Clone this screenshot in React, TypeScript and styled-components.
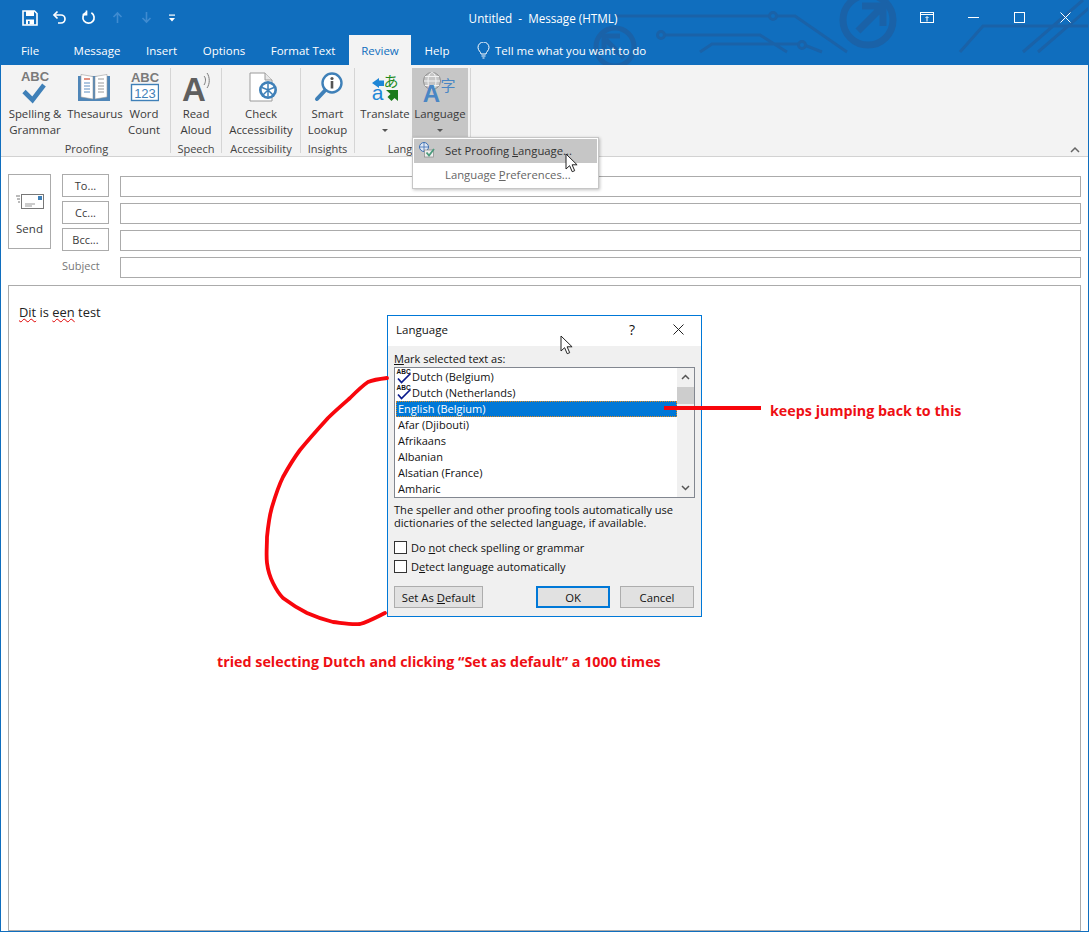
import React from "react";
import styled, { createGlobalStyle } from "styled-components";

const Global = createGlobalStyle`
  html, body { margin: 0; padding: 0; background: #fff; }
  * { box-sizing: border-box; }
  #root { width: 1089px; height: 932px; }
`;

const FONT = `"Open Sans", "Noto Sans", "Liberation Sans", sans-serif`;

const Window = styled.div`
  position: relative;
  width: 1089px;
  height: 932px;
  overflow: hidden;
  display: flex;
  flex-direction: column;
  background: #fff;
  border: 1px solid #106ebe;
  border-top: 0;
  font-family: ${FONT};
  font-size: 11.5px;
  color: #3a3a3a;
`;

const BlueHead = styled.div`
  position: relative;
  background: #106ebe;
  color: #fff;
  height: 65px;
  margin: 0 -1px;
  overflow: hidden;
`;
const Circuit = styled.svg`
  position: absolute;
  left: 0;
  top: 0;
  pointer-events: none;
`;
const TitleRow = styled.div`
  position: relative;
  height: 35px;
  display: flex;
  align-items: center;
  padding-left: 22px;
`;
const Qat = styled.div`
  display: flex;
  align-items: center;
  gap: 14px;
  width: 446px;
`;
const WindowTitle = styled.div`
  width: 150px;
  text-align: center;
  font-size: 11.7px;
  white-space: pre;
`;
const WinControls = styled.div`
  margin-left: auto;
  display: flex;
  align-items: center;
  padding-right: 1px;
`;
const WinBtn = styled.div`
  width: 46px;
  height: 32px;
  display: flex;
  align-items: center;
  justify-content: center;
`;
const TabRow = styled.div`
  position: relative;
  height: 30px;
  display: flex;
  align-items: stretch;
  padding-left: 8px;
`;
const Tab = styled.div<{ $w: number; $active?: boolean; $left?: number }>`
  width: ${p => p.$w}px;
  margin-left: ${p => p.$left ?? 0}px;
  display: flex;
  align-items: center;
  justify-content: center;
  font-size: 11.5px;
  white-space: nowrap;
  background: ${p => (p.$active ? "#f3f3f3" : "transparent")};
  color: ${p => (p.$active ? "#106ebe" : "#fff")};
`;
const TellMe = styled.div`
  display: flex;
  align-items: center;
  gap: 5px;
  font-size: 11.5px;
  margin-left: 14px;
  white-space: nowrap;
`;

const Ribbon = styled.div`
  position: relative;
  height: 92px;
  background: #f3f3f3;
  border-bottom: 1px solid #d2d2d2;
  display: flex;
  padding: 3px 0 0 2px;
`;
const Group = styled.div<{ $w: number }>`
  width: ${p => p.$w}px;
  height: 85px;
  border-right: 1px solid #d5d5d5;
  display: flex;
  flex-direction: column;
`;
const GroupButtons = styled.div`
  display: flex;
  height: 70px;
`;
const GroupLabel = styled.div`
  text-align: center;
  font-size: 11px;
  line-height: 14px;
  margin-top: 4px;
  color: #444;
  white-space: nowrap;
`;
const RibbonBtn = styled.div<{ $w: number; $on?: boolean; $pad?: number }>`
  width: ${p => p.$w}px;
  height: 70px;
  flex: none;
  padding-left: ${p => p.$pad ?? 0}px;
  display: flex;
  flex-direction: column;
  align-items: center;
  background: ${p => (p.$on ? "#c6c6c6" : "transparent")};
`;
const RibbonIcon = styled.div`
  height: 38px;
  width: 100%;
  padding-top: 2px;
  display: flex;
  align-items: flex-start;
  justify-content: center;
`;
const RibbonText = styled.div`
  text-align: center;
  font-size: 11.4px;
  line-height: 16px;
  white-space: pre;
`;
const Caret = styled.div`
  width: 0;
  height: 0;
  margin-top: 7px;
  border-left: 3px solid transparent;
  border-right: 3px solid transparent;
  border-top: 3px solid #555;
`;
const Collapse = styled.svg`
  position: absolute;
  right: 8px;
  bottom: 3px;
`;

const Compose = styled.div`
  height: 128px;
  display: flex;
  padding: 17px 7px 0 7px;
`;
const Send = styled.div`
  width: 43px;
  height: 75px;
  border: 1px solid #ababab;
  display: flex;
  flex-direction: column;
  align-items: center;
  padding-top: 19px;
  gap: 12px;
  font-size: 11.5px;
`;
const AddrCol = styled.div`
  width: 58px;
  margin-left: 11px;
  display: flex;
  flex-direction: column;
`;
const AddrBtn = styled.div`
  width: 47px;
  height: 23px;
  margin-bottom: 4px;
  border: 1px solid #ababab;
  font-size: 11px;
  display: flex;
  align-items: center;
  justify-content: center;
`;
const SubjectLabel = styled.div`
  height: 21px;
  font-size: 11px;
  line-height: 21px;
  color: #777;
`;
const FieldCol = styled.div`
  flex: 1;
  padding-top: 2px;
  display: flex;
  flex-direction: column;
  gap: 6px;
`;
const Field = styled.div`
  height: 21px;
  border: 1px solid #ababab;
`;
const MailBody = styled.div`
  flex: 1;
  margin: 0 7px 0 7px;
  border: 1px solid #ababab;
  padding: 18px 10px;
  font-size: 12.9px;
  line-height: 17px;
  color: #222;
`;
const Misspelled = styled.span`
  text-decoration: underline wavy #e00000 1px;
  text-underline-offset: 1px;
`;

const Menu = styled.div`
  position: absolute;
  left: 411px;
  top: 137px;
  width: 187px;
  height: 52px;
  background: #fff;
  border: 1px solid #c6c6c6;
  box-shadow: 1px 1px 3px rgba(0, 0, 0, 0.25);
  padding: 1px;
`;
const MenuItem = styled.div<{ $on?: boolean }>`
  height: 24px;
  display: flex;
  align-items: center;
  padding: 0 0 2px 4px;
  background: ${p => (p.$on ? "#c6c6c6" : "transparent")};
  color: ${p => (p.$on ? "#333" : "#666")};
  font-size: 11.3px;
  white-space: nowrap;
`;
const MenuIcon = styled.div`
  width: 27px;
  height: 18px;
  flex: none;
`;

const Dialog = styled.div`
  position: absolute;
  left: 386px;
  top: 315px;
  width: 315px;
  height: 302px;
  border: 1px solid #0078d7;
  background: #f0f0f0;
  color: #111;
  font-size: 11px;
  display: flex;
  flex-direction: column;
`;
const DialogTitle = styled.div`
  height: 30px;
  background: #fff;
  display: flex;
  align-items: center;
  padding: 0 0 4px 8px;
  font-size: 11.5px;
`;
const DialogHelp = styled.div`
  margin-left: auto;
  width: 16px;
  font-size: 14px;
  text-align: center;
`;
const DialogClose = styled.div`
  width: 46px;
  margin-left: 15px;
  display: flex;
  justify-content: center;
`;
const DialogBody = styled.div`
  flex: 1;
  padding: 6px 6px 8px 6px;
  display: flex;
  flex-direction: column;
`;
const ListCaption = styled.div`
  height: 15px;
  line-height: 14px;
`;
const ListBox = styled.div`
  height: 131px;
  border: 1px solid #828790;
  background: #fff;
  display: flex;
  padding: 1px 0 0 1px;
`;
const Rows = styled.div`
  flex: 1;
  display: flex;
  flex-direction: column;
`;
const Row = styled.div<{ $sel?: boolean; $icon?: boolean }>`
  height: 16px;
  flex: none;
  display: flex;
  align-items: center;
  padding: 0 0 2px ${p => (p.$icon ? "0" : "2px")};
  background: ${p => (p.$sel ? "#0078d7" : "transparent")};
  color: ${p => (p.$sel ? "#fff" : "#111")};
  outline: ${p => (p.$sel ? "1px dotted #e08a1e" : "none")};
  outline-offset: -1px;
  white-space: nowrap;
`;
const ScrollBar = styled.div`
  width: 17px;
  background: #f0f0f0;
  display: flex;
  flex-direction: column;
  align-items: center;
  margin-top: -1px;
`;
const ScrollBtn = styled.div`
  height: 18px;
  flex: none;
  display: flex;
  align-items: center;
  justify-content: center;
`;
const Thumb = styled.div`
  width: 17px;
  height: 17px;
  margin-top: 1px;
  flex: none;
  background: #cdcdcd;
`;
const ScrollSpace = styled.div`
  flex: 1;
`;
const Note = styled.div`
  margin-top: 5px;
  line-height: 13px;
  font-size: 11.1px;
  white-space: pre;
`;
const CheckRow = styled.label<{ $top: number }>`
  display: flex;
  align-items: center;
  gap: 4px;
  height: 13px;
  margin-top: ${p => p.$top}px;
`;
const CheckBox = styled.span`
  width: 13px;
  height: 13px;
  border: 1px solid #333;
  background: #fff;
  flex: none;
`;
const DialogButtons = styled.div`
  display: flex;
  margin-top: auto;
`;
const DialogBtn = styled.div<{ $w: number; $def?: boolean; $left?: number }>`
  width: ${p => p.$w}px;
  height: 22px;
  margin-left: ${p => p.$left ?? 0}px;
  background: #e1e1e1;
  border: ${p => (p.$def ? "2px solid #0078d7" : "1px solid #adadad")};
  display: flex;
  align-items: center;
  justify-content: center;
  font-size: 11.3px;
`;

const Overlay = styled.svg`
  position: absolute;
  left: 0;
  top: 0;
  pointer-events: none;
`;
const Remark = styled.div<{ $x: number; $y: number }>`
  position: absolute;
  left: ${p => p.$x}px;
  top: ${p => p.$y}px;
  color: #ee0f14;
  font-family: ${FONT};
  font-weight: 700;
  font-size: 14.3px;
  line-height: 18px;
  white-space: nowrap;
`;
const Pointer = styled.svg<{ $x: number; $y: number }>`
  position: absolute;
  left: ${p => p.$x}px;
  top: ${p => p.$y}px;
`;

const CursorArrow = ({ x, y }: { x: number; y: number }) => (
  <Pointer $x={x} $y={y} width="14" height="20" viewBox="0 0 14 20">
    <path d="M1 1v15l3.600-3.300 2.600 6 2.500-1-2.600-5.900h5z" fill="#fff" stroke="#222" strokeWidth="1" strokeLinejoin="round" />
  </Pointer>
);

const SaveIcon = () => (
  <svg width="16" height="16" viewBox="0 0 16 16">
    <path d="M1 1h11.500L15 3.500V15H1z" fill="none" stroke="#fff" strokeWidth="1.600" />
    <rect x="4" y="1" width="8" height="5" fill="#fff" />
    <rect x="4" y="9.500" width="8" height="5" fill="#fff" />
    <rect x="6" y="11" width="1.600" height="3" fill="#106ebe" />
  </svg>
);
const UndoIcon = () => (
  <svg width="15" height="15" viewBox="0 0 15 15" fill="none" stroke="#fff" strokeWidth="1.700">
    <path d="M5.500 1.500 2 5l3.500 3.500" />
    <path d="M2.500 5H9a4 4 0 0 1 0 8H6" />
  </svg>
);
const RedoIcon = () => (
  <svg width="15" height="15" viewBox="0 0 15 15" fill="none" stroke="#fff" strokeWidth="1.700">
    <path d="M5 2.600a5.600 5.600 0 1 0 5.400.2" />
    <path d="M5.500 0.400v4.200H1.600" />
  </svg>
);
const DimArrow = ({ down }: { down?: boolean }) => (
  <svg width="15" height="13" viewBox="0 0 15 13" fill="none" stroke="#3f8bd0" strokeWidth="1.600" style={{ transform: down ? "rotate(180deg)" : undefined }}>
    <path d="M7.500 12V2M3.500 6l4-4 4 4" />
  </svg>
);
const QatMore = () => (
  <svg width="8" height="8" viewBox="0 0 8 8" fill="#fff">
    <rect x="1" y="0.500" width="6" height="1.200" />
    <path d="M1 4h6L4 7.400z" />
  </svg>
);

const SpellIcon = () => (
  <svg width="36" height="36" viewBox="0 0 36 36">
    <text x="18" y="11" textAnchor="middle" fontFamily="Liberation Sans" fontWeight="700" fontSize="13" fill="#7a7a7a">ABC</text>
    <path d="M7 21.500 15.500 30 27 15" fill="none" stroke="#3f80b8" strokeWidth="4.600" />
  </svg>
);
const BookIcon = () => (
  <svg width="34" height="32" viewBox="1 -3 34 32">
    <rect x="1" y="3" width="32" height="25" fill="#4f86b8" />
    <path d="M4 1.500 16 3.500V26L4 24z" fill="#fff" stroke="#9c9c9c" strokeWidth=".6" />
    <path d="M30 1.500 18 3.500V26L30 24z" fill="#fff" stroke="#9c9c9c" strokeWidth=".6" />
    <path d="M7 6h6" stroke="#d1492e" strokeWidth="1.200" />
    <path d="M7 10h6M7 13h6M7 16h6M7 19h6" stroke="#5c8ec0" strokeWidth="1" />
    <path d="M21 6h6M21 10h6M21 13h6M21 16h6M21 19h6" stroke="#9a9a9a" strokeWidth="1" />
  </svg>
);
const WordCountIcon = () => (
  <svg width="30" height="34" viewBox="-1 0 30 34">
    <text x="15" y="12" textAnchor="middle" fontFamily="Liberation Sans" fontSize="13" fontWeight="700" fill="#7a7a7a">ABC</text>
    <rect x="1.500" y="14.500" width="27" height="16" fill="#fff" stroke="#3f80b8" strokeWidth="1.400" />
    <text x="15" y="27.500" textAnchor="middle" fontFamily="Liberation Sans" fontSize="13" fill="#3f80b8">123</text>
  </svg>
);
const ReadAloudIcon = () => (
  <svg width="34" height="40" viewBox="0 0 34 40">
    <text x="15" y="31" textAnchor="middle" fontFamily="Liberation Sans" fontWeight="700" fontSize="33" fill="#5f5f5f">A</text>
    <path d="M25 6c2 2 2 6 0 9M28 3c3 4 3 11 0 15" fill="none" stroke="#7a7a7a" strokeWidth="1" />
  </svg>
);
const AccessIcon = () => (
  <svg width="34" height="34" viewBox="0 0 34 34">
    <path d="M6 3h15l7 7v21H6z" fill="#fff" stroke="#9a9a9a" />
    <path d="M21 3v7h7" fill="#e8e8e8" stroke="#9a9a9a" />
    <circle cx="24" cy="20" r="9" fill="#3f80b8" />
    <circle cx="24" cy="20" r="6.300" fill="#fff" />
    <path d="M24 13.500v13M18 17.500l6 2.500 6-2.500M19 25l5-5 5 5" stroke="#3f80b8" strokeWidth="1.500" fill="none" />
  </svg>
);
const LookupIcon = () => (
  <svg width="32" height="34" viewBox="0 0 32 34">
    <circle cx="20" cy="13" r="9.500" fill="#fff" stroke="#3f80b8" strokeWidth="2.400" />
    <path d="M13 20.500 5 29" stroke="#3f80b8" strokeWidth="4" strokeLinecap="round" />
    <circle cx="20" cy="8.500" r="1.600" fill="#555" />
    <rect x="18.700" y="11" width="2.600" height="7.500" fill="#555" />
  </svg>
);
const TranslateIcon = () => (
  <svg width="30" height="38" viewBox="0 0 30 38">
    <path d="M2 13 9 8v2.500h5V16H9v2z" fill="#1e86d6" />
    <text x="21" y="17" textAnchor="middle" fontFamily="Noto Sans CJK JP" fontSize="15" fill="#1c8a1c">あ</text>
    <text x="7.500" y="30" textAnchor="middle" fontFamily="Liberation Sans" fontSize="21" fill="#1e86d6">a</text>
    <path d="M16 20h12v11l-3.500-3-3 3-4-4 3-3z" fill="#1c7a1c" />
  </svg>
);
const LanguageIcon = () => (
  <svg width="36" height="38" viewBox="0 0 36 38">
    <g fill="none" stroke="#f2f2f2" strokeWidth="1">
      <circle cx="10" cy="11" r="8.500" stroke="#8f8f8f" />
      <ellipse cx="10" cy="11" rx="4" ry="8.500" />
      <path d="M2 11h16M3 6.500h14M3 15.500h14" />
    </g>
    <text x="9.500" y="32" textAnchor="middle" fontFamily="Liberation Sans" fontWeight="700" fontSize="24" fill="#4a86c4">A</text>
    <text x="26" y="21" textAnchor="middle" fontFamily="Noto Sans CJK SC" fontSize="15" fill="#4a86c4">字</text>
  </svg>
);
const ProofMenuIcon = () => (
  <svg width="18" height="18" viewBox="0 0 18 18">
    <circle cx="6" cy="6" r="4.500" fill="#dfe7f3" stroke="#3c6fb4" strokeWidth="1" />
    <path d="M1.500 6h9M6 1.500v9" stroke="#3c6fb4" strokeWidth=".8" />
    <rect x="6.500" y="9" width="9" height="7" fill="#eee" stroke="#888" strokeWidth=".7" />
    <path d="M8.500 11.500 11 14.500 16 8" fill="none" stroke="#4d9b7d" strokeWidth="1.800" />
  </svg>
);
const ListProofIcon = () => (
  <svg width="16" height="16" viewBox="0 0 16 16">
    <text x="0.500" y="6" fontFamily="Liberation Sans" fontWeight="700" fontSize="6.500" fill="#111">ABC</text>
    <path d="M2 10.500 5.500 14.500 14.500 5.500" fill="none" stroke="#0a1a8c" strokeWidth="1.700" />
  </svg>
);

export default function App() {
  return (
    <Window>
      <Global />
      <BlueHead>
        <Circuit width="1089" height="65" viewBox="0 0 1089 65" fill="none" stroke="#1a62a8" strokeWidth="3">
          <circle cx="868" cy="20" r="25" strokeWidth="7" />
          <path d="M858 31 880 9M862 6h21v20" strokeWidth="7" />
          <circle cx="615" cy="47" r="19" strokeWidth="5" />
          <path d="M624 58 606 40M604 52V36h16" strokeWidth="5" />
          <path d="M615 16H795L847 52M661 35H760L787 52M700 52 712 44H802L822 52" />
          <circle cx="773" cy="16" r="3.500" fill="#106ebe" />
          <circle cx="661" cy="35" r="3.500" fill="#106ebe" />
          <circle cx="802" cy="45" r="3.500" fill="#106ebe" />
          <path d="M960 52 983 26H1089M1023 52 1083 0M1038 52 1089 8" />
        </Circuit>
        <TitleRow>
          <Qat>
            <SaveIcon />
            <UndoIcon />
            <RedoIcon />
            <DimArrow />
            <DimArrow down />
            <QatMore />
          </Qat>
          <WindowTitle>Untitled  -  Message (HTML)</WindowTitle>
          <WinControls>
            <WinBtn>
              <svg width="14" height="11" viewBox="0 0 14 11" fill="none" stroke="#fff">
                <rect x=".5" y=".5" width="13" height="10" />
                <path d="M.5 2.500h13M7 9.500V5M5.500 6 7 4.500 8.500 6" />
              </svg>
            </WinBtn>
            <WinBtn>
              <svg width="11" height="2" viewBox="0 0 11 2"><rect width="11" height="1" fill="#fff" /></svg>
            </WinBtn>
            <WinBtn>
              <svg width="11" height="11" viewBox="0 0 11 11"><rect x=".5" y=".5" width="10" height="10" fill="none" stroke="#fff" /></svg>
            </WinBtn>
            <WinBtn>
              <svg width="11" height="11" viewBox="0 0 11 11"><path d="M.5.500l10 10M10.500.500l-10 10" stroke="#fff" /></svg>
            </WinBtn>
          </WinControls>
        </TitleRow>
        <TabRow>
          <Tab $w={44}>File</Tab>
          <Tab $w={90}>Message</Tab>
          <Tab $w={39}>Insert</Tab>
          <Tab $w={86}>Options</Tab>
          <Tab $w={72}>Format Text</Tab>
          <Tab $w={62} $left={10} $active>Review</Tab>
          <Tab $w={52}>Help</Tab>
          <TellMe>
            <svg width="13" height="17" viewBox="0 0 13 17" fill="none" stroke="#fff">
              <path d="M4 12c0-2-3-3.500-3-6.500a5.500 5.500 0 0 1 11 0C12 8.500 9 10 9 12z" />
              <path d="M4.500 14h4M5.500 16h2" />
            </svg>
            Tell me what you want to do
          </TellMe>
        </TabRow>
      </BlueHead>
      <Ribbon>
        <Group $w={168}>
          <GroupButtons>
            <RibbonBtn $w={64}><RibbonIcon><SpellIcon /></RibbonIcon><RibbonText>{"Spelling &\nGrammar"}</RibbonText></RibbonBtn>
            <RibbonBtn $w={56}><RibbonIcon><BookIcon /></RibbonIcon><RibbonText>Thesaurus</RibbonText></RibbonBtn>
            <RibbonBtn $w={42}><RibbonIcon><WordCountIcon /></RibbonIcon><RibbonText>{"Word\nCount"}</RibbonText></RibbonBtn>
          </GroupButtons>
          <GroupLabel>Proofing</GroupLabel>
        </Group>
        <Group $w={51}>
          <GroupButtons>
            <RibbonBtn $w={50}><RibbonIcon><ReadAloudIcon /></RibbonIcon><RibbonText>{"Read\nAloud"}</RibbonText></RibbonBtn>
          </GroupButtons>
          <GroupLabel>Speech</GroupLabel>
        </Group>
        <Group $w={79}>
          <GroupButtons>
            <RibbonBtn $w={78}><RibbonIcon><AccessIcon /></RibbonIcon><RibbonText>{"Check\nAccessibility"}</RibbonText></RibbonBtn>
          </GroupButtons>
          <GroupLabel>Accessibility</GroupLabel>
        </Group>
        <Group $w={54}>
          <GroupButtons>
            <RibbonBtn $w={53}><RibbonIcon><LookupIcon /></RibbonIcon><RibbonText>{"Smart\nLookup"}</RibbonText></RibbonBtn>
          </GroupButtons>
          <GroupLabel>Insights</GroupLabel>
        </Group>
        <Group $w={116}>
          <GroupButtons>
            <RibbonBtn $w={57} $pad={3}><RibbonIcon><TranslateIcon /></RibbonIcon><RibbonText>Translate</RibbonText><Caret /></RibbonBtn>
            <RibbonBtn $w={56} $on><RibbonIcon><LanguageIcon /></RibbonIcon><RibbonText>Language</RibbonText><Caret /></RibbonBtn>
          </GroupButtons>
          <GroupLabel>Language</GroupLabel>
        </Group>
        <Collapse width="10" height="7" viewBox="0 0 10 7" fill="none" stroke="#666" strokeWidth="1.500">
          <path d="M1 6l4-4 4 4" />
        </Collapse>
      </Ribbon>
      <Compose>
        <Send>
          <svg width="28" height="15" viewBox="0 0 28 15">
            <path d="M0 2h4M1 5h3M2 8h2" stroke="#777" />
            <rect x="5.500" y=".5" width="22" height="14" fill="#fff" stroke="#777" />
            <path d="M9 10h10M9 12h7" stroke="#999" />
            <rect x="22" y="2" width="4" height="4" fill="#3f80b8" />
          </svg>
          Send
        </Send>
        <AddrCol>
          <AddrBtn>To...</AddrBtn>
          <AddrBtn>Cc...</AddrBtn>
          <AddrBtn>Bcc...</AddrBtn>
          <SubjectLabel>Subject</SubjectLabel>
        </AddrCol>
        <FieldCol>
          <Field />
          <Field />
          <Field />
          <Field />
        </FieldCol>
      </Compose>
      <MailBody>
        <Misspelled>Dit</Misspelled> is <Misspelled>een</Misspelled> test
      </MailBody>

      <Menu>
        <MenuItem $on>
          <MenuIcon><ProofMenuIcon /></MenuIcon>
          <span>Set Proofing <u>L</u>anguage...</span>
        </MenuItem>
        <MenuItem>
          <MenuIcon />
          <span>Language <u>P</u>references...</span>
        </MenuItem>
      </Menu>

      <Dialog>
        <DialogTitle>
          Language
          <DialogHelp>?</DialogHelp>
          <DialogClose>
            <svg width="11" height="11" viewBox="0 0 11 11"><path d="M.5.500l10 10M10.500.500l-10 10" stroke="#222" /></svg>
          </DialogClose>
        </DialogTitle>
        <DialogBody>
          <ListCaption><u>M</u>ark selected text as:</ListCaption>
          <ListBox>
            <Rows>
              <Row $icon><ListProofIcon />Dutch (Belgium)</Row>
              <Row $icon><ListProofIcon />Dutch (Netherlands)</Row>
              <Row $sel>English (Belgium)</Row>
              <Row>Afar (Djibouti)</Row>
              <Row>Afrikaans</Row>
              <Row>Albanian</Row>
              <Row>Alsatian (France)</Row>
              <Row>Amharic</Row>
            </Rows>
            <ScrollBar>
              <ScrollBtn>
                <svg width="9" height="6" viewBox="0 0 9 6" fill="none" stroke="#555" strokeWidth="1.500"><path d="M1 5l3.500-3.500L8 5" /></svg>
              </ScrollBtn>
              <Thumb />
              <ScrollSpace />
              <ScrollBtn>
                <svg width="9" height="6" viewBox="0 0 9 6" fill="none" stroke="#555" strokeWidth="1.500"><path d="M1 1l3.500 3.500L8 1" /></svg>
              </ScrollBtn>
            </ScrollBar>
          </ListBox>
          <Note>{"The speller and other proofing tools automatically use\ndictionaries of the selected language, if available."}</Note>
          <CheckRow $top={12}><CheckBox /><span>Do <u>n</u>ot check spelling or grammar</span></CheckRow>
          <CheckRow $top={6}><CheckBox /><span>D<u>e</u>tect language automatically</span></CheckRow>
          <DialogButtons>
            <DialogBtn $w={89}><span>Set As <u>D</u>efault</span></DialogBtn>
            <DialogBtn $w={74} $def $left={53}>OK</DialogBtn>
            <DialogBtn $w={74} $left={10}>Cancel</DialogBtn>
          </DialogButtons>
        </DialogBody>
      </Dialog>

      <Overlay width="1089" height="932" viewBox="0 0 1089 932" fill="none" stroke="#f8060c">
        <path d="M386 378C378 379 372 380 367 382C361 386 354 393 349 398C341 405 334 411 327 418C317 429 308 439 299 450C293 458 287 468 282 477C277 487 274 497 271 507C268 517 267 527 266 537C266 546 265 555 266 563C267 571 269 577 272 583C275 589 278 594 282 598C290 604 298 609 306 613C315 617 324 620 332 622C341 623 351 625 359 624C367 622 376 617 384 613" strokeWidth="3.800" strokeLinecap="round" />
        <path d="M663 408H760" strokeWidth="3.800" />
      </Overlay>
      <Remark $x={769} $y={402}>keeps jumping back to this</Remark>
      <Remark $x={216} $y={653}>tried selecting Dutch and clicking “Set as default” a 1000 times</Remark>
      <CursorArrow x={559} y={335} />
      <CursorArrow x={564} y={153} />
    </Window>
  );
}
